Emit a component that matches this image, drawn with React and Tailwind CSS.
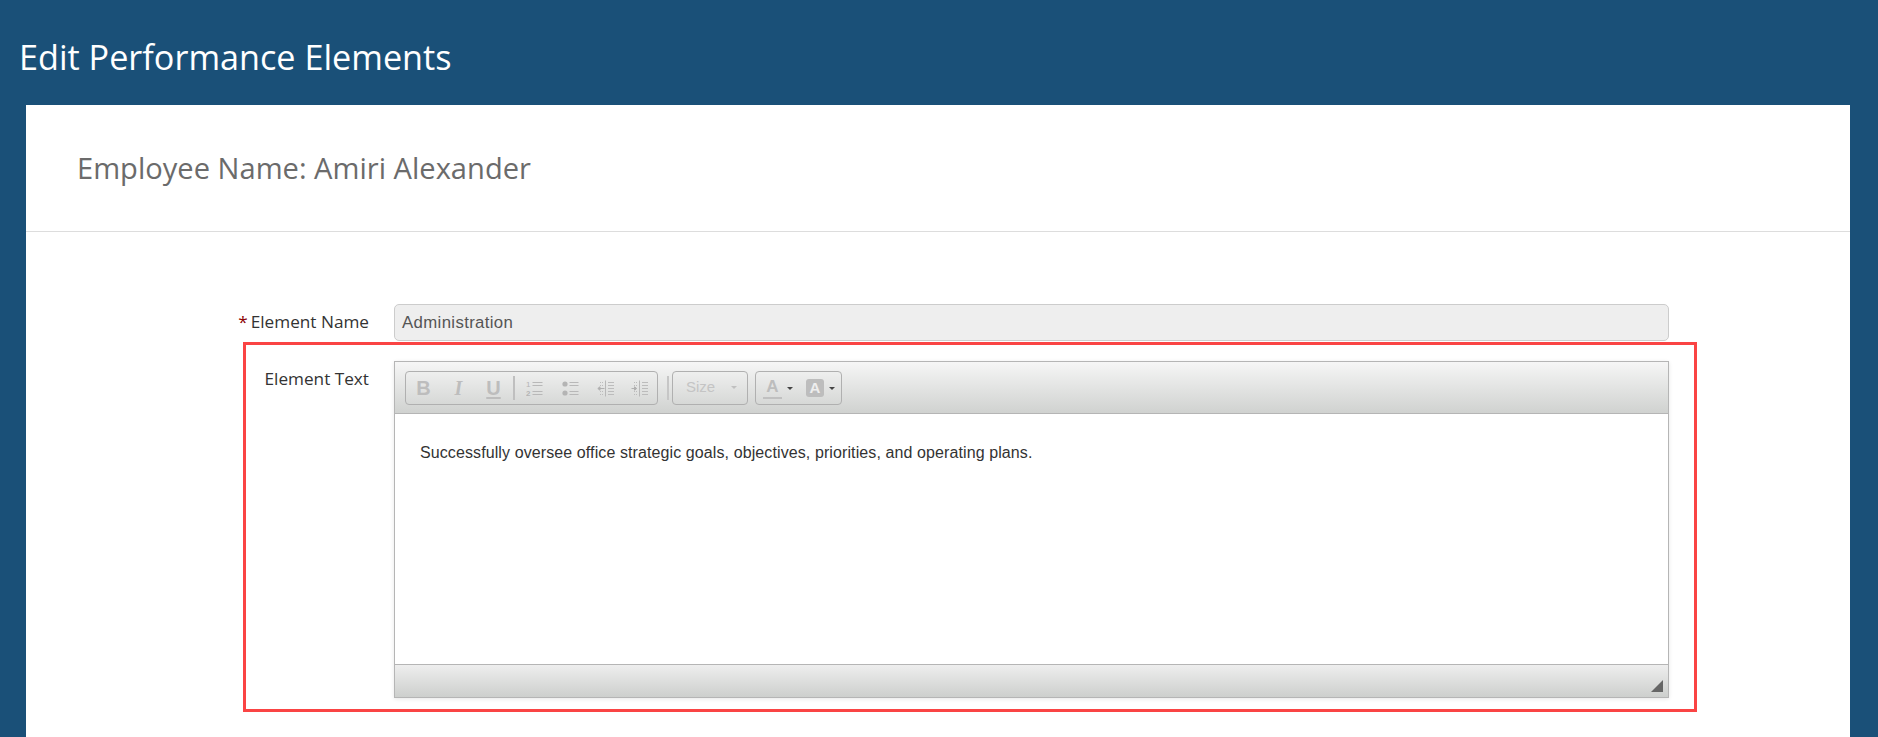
const TITLE_FONT = "font-['Open_Sans',sans-serif]"

function OrderedIcon() {
  return (
    <svg width="17" height="17" viewBox="0 0 17 17" fill="none">
      <text x="0" y="7" fontSize="8" fontFamily="Liberation Sans, sans-serif" fill="#b4b4b4">1</text>
      <text x="0" y="16" fontSize="8" fontWeight="700" fontFamily="Liberation Sans, sans-serif" fill="#b4b4b4">2</text>
      <path d="M6.5 2.5h10M6.5 5.5h10M6.5 11.5h10M6.5 14.5h10" stroke="#b8b8b8" strokeWidth="1.2" />
    </svg>
  )
}

function BulletIcon() {
  return (
    <svg width="17" height="17" viewBox="0 0 17 17" fill="none">
      <circle cx="3" cy="4" r="2.6" fill="#b4b4b4" />
      <circle cx="3" cy="13" r="2.6" fill="#b4b4b4" />
      <path d="M7.5 2.5h9M7.5 5.5h9M7.5 11.5h9M7.5 14.5h9" stroke="#b8b8b8" strokeWidth="1.2" />
    </svg>
  )
}

function IndentIcon({ forward }) {
  return (
    <svg width="18" height="17" viewBox="0 0 18 17" fill="none">
      <path d="M11 2.5h6M11 5.5h6M11 8.5h6M11 11.5h6M11 14.5h6" stroke="#bcbcbc" strokeWidth="1.1" />
      <path d="M8.5 0.5v16" stroke="#b8b8b8" strokeWidth="1" />
      <path d="M3 2.5h4M3 5.5h4M3 11.5h4M3 14.5h4" stroke="#bcbcbc" strokeWidth="1" strokeDasharray="1 1" />
      {forward ? (
        <path d="M0.5 8.5h4M3.5 6.8l2.2 1.7-2.2 1.7z" stroke="#b0b0b0" strokeWidth="1" fill="#b0b0b0" />
      ) : (
        <path d="M2.5 8.5h5M3 6.8L0.8 8.5 3 10.2z" stroke="#b0b0b0" strokeWidth="1" fill="#b0b0b0" />
      )}
    </svg>
  )
}

function Caret({ color = 'border-t-[#444]' }) {
  return <span className={`w-0 h-0 border-x-[3px] border-x-transparent border-t-[3px] ${color}`} />
}

export default function App() {
  return (
    <div className="w-full h-[737px] overflow-hidden bg-[#1a5078]">
      {/* Header */}
      <div className="h-[105px] pl-[19px] pt-[32px]">
        <h1 className={`${TITLE_FONT} text-[34.2px] leading-[50px] text-white`}>Edit Performance Elements</h1>
      </div>

      {/* Card */}
      <div className="ml-[26px] w-[1824px] h-[632px] bg-white">
        <div className="h-[127px] pl-[51px] pt-[42px] border-b border-[#dddddd]">
          <h2 className={`${TITLE_FONT} text-[29.1px] leading-[42px] text-[#6b6b6b]`}>Employee Name: Amiri Alexander</h2>
        </div>

        <div className="pt-[72px] pl-[217px] w-[1671px]">
          {/* Element Name */}
          <div className="flex items-center h-[37px]">
            <label className={`${TITLE_FONT} w-[126px] flex justify-end pb-[2px] whitespace-nowrap text-[17.2px] text-[#333333]`}>
              <span className="text-[#8b0000] mr-[3px]">*</span>Element Name
            </label>
            <div className="ml-[25px] w-[1275px] h-[37px] flex items-center px-[7px] rounded-[5px] border border-[#cccccc] bg-[#eeeeee] font-['Liberation_Sans',sans-serif] text-[16.8px] tracking-[0.35px] text-[#555555]">
              Administration
            </div>
          </div>

          {/* Element Text, outlined in red */}
          <div className="mt-px flex h-[370px] w-[1454px] border-[3px] border-[#fa4444] pt-[22px]">
            <label className={`${TITLE_FONT} w-[123px] text-right whitespace-nowrap text-[17.2px] leading-[24px] text-[#333333]`}>
              Element Text
            </label>
            <div className="ml-[25px] -mt-[6px] w-[1275px] h-[337px] flex flex-col border border-[#b5b5b5] shadow-[0_1px_4px_rgba(0,0,0,0.1)]">
              {/* Toolbar */}
              <div className="h-[52px] shrink-0 flex items-center pl-[10px] pt-px border-b border-[#b5b5b5] bg-gradient-to-b from-[#f6f6f6] to-[#d0d2d0]">
                <div className="w-[253px] h-[34px] flex items-center rounded-[4px] border border-[#b0b0b0] font-['Liberation_Sans',sans-serif] text-[#bdbdbd]">
                  <span className="w-[35px] text-center text-[20px] font-bold">B</span>
                  <span className="w-[35px] text-center text-[20px] font-bold italic font-['Liberation_Serif',serif]">I</span>
                  <span className="w-[35px] mr-[2px] text-center text-[20px] font-bold underline underline-offset-2">U</span>
                  <span className="w-[2px] h-[24px] bg-[#bfbfbf]" />
                  <span className="w-[38px] flex justify-center"><OrderedIcon /></span>
                  <span className="w-[35px] flex justify-center"><BulletIcon /></span>
                  <span className="w-[35px] flex justify-center"><IndentIcon /></span>
                  <span className="w-[34px] flex justify-center"><IndentIcon forward /></span>
                </div>
                <span className="w-[2px] h-[24px] ml-[9px] bg-[#c6c6c6]" />
                <div className="w-[76px] h-[34px] ml-[3px] flex items-center justify-between pl-[13px] pr-[10px] pb-[2px] rounded-[4px] border border-[#b0b0b0] font-['Liberation_Sans',sans-serif] text-[15px] text-[#c4c4c4]">
                  Size
                  <Caret color="border-t-[#c0c0c0]" />
                </div>
                <div className="w-[87px] h-[34px] ml-[7px] flex items-center rounded-[4px] border border-[#b0b0b0]">
                  <span className="ml-[7px] w-[19px] text-center border-b-[2px] border-[#c0c0c0] leading-[20px] font-['Liberation_Sans',sans-serif] font-bold text-[17px] text-[#bdbdbd]">A</span>
                  <span className="ml-[5px] flex"><Caret /></span>
                  <span className="ml-[13px] w-[18px] h-[18px] flex items-center justify-center rounded-[3px] bg-[#bdbdbd] font-['Liberation_Sans',sans-serif] font-bold text-[15px] text-[#eeeeee]">A</span>
                  <span className="ml-[5px] flex"><Caret /></span>
                </div>
              </div>

              {/* Content */}
              <div className="flex-1 bg-white pl-[25px] pt-[29px] font-['Liberation_Sans',sans-serif] text-[16px] tracking-[0.1px] leading-[20px] text-[#333333]">
                Successfully oversee office strategic goals, objectives, priorities, and operating plans.
              </div>

              {/* Status bar */}
              <div className="h-[33px] shrink-0 flex items-end justify-end pr-[5px] pb-[5px] border-t border-[#b5b5b5] bg-gradient-to-b from-[#eeeeee] to-[#cdcfcd]">
                <span className="w-0 h-0 border-l-[12px] border-l-transparent border-b-[12px] border-b-[#666666]" />
              </div>
            </div>
          </div>
        </div>
      </div>
    </div>
  )
}
